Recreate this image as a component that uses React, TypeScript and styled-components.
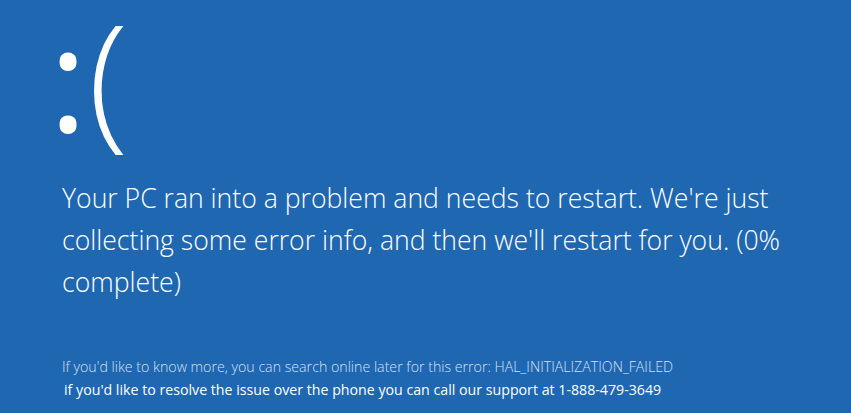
import styled, { createGlobalStyle } from "styled-components";

const Global = createGlobalStyle`
  html, body {
    margin: 0;
    padding: 0;
    background: #2067b2;
  }
`;

const Screen = styled.div`
  width: 851px;
  height: 413px;
  background: #2067b2;
  color: #ffffff;
  font-family: "Open Sans", "Noto Sans", sans-serif;
  display: flex;
  flex-direction: column;
  padding: 0 0 0 62px;
  box-sizing: border-box;
  overflow: hidden;
`;

const Face = styled.div`
  display: flex;
  align-items: baseline;
  height: 174px;
  padding-top: 1px;
  line-height: 1;
`;

const Glyph = styled.span<{ $size: number; $weight: number; $shift?: number }>`
  font-size: ${(p) => p.$size}px;
  font-weight: ${(p) => p.$weight};
  margin-left: ${(p) => p.$shift ?? 0}px;
`;

const Message = styled.p`
  margin: 2px 0 0;
  width: 740px;
  font-size: 26.6px;
  font-weight: 300;
  line-height: 42px;
`;

const Detail = styled.p<{ $dim?: boolean }>`
  margin: ${(p) => (p.$dim ? "54px 0 0" : "3px 0 0 2px")};
  font-size: 14.2px;
  line-height: 20px;
  font-weight: ${(p) => (p.$dim ? 300 : 400)};
  color: ${(p) => (p.$dim ? "#d4e1f2" : "#ffffff")};
`;

export default function App() {
  return (
    <>
      <Global />
      <Screen>
        <Face>
          <Glyph $size={145} $weight={500} $shift={-13}>:</Glyph>
          <Glyph $size={148} $weight={300} $shift={1}>(</Glyph>
        </Face>
        <Message>
          Your PC ran into a problem and needs to restart. We're just
          collecting some error info, and then we'll restart for you. (0%
          complete)
        </Message>
        <Detail $dim>
          If you'd like to know more, you can search online later for this
          error: HAL_INITIALIZATION_FAILED
        </Detail>
        <Detail>
          if you'd like to resolve the issue over the phone you can call our
          support at 1-888-479-3649
        </Detail>
      </Screen>
    </>
  );
}
